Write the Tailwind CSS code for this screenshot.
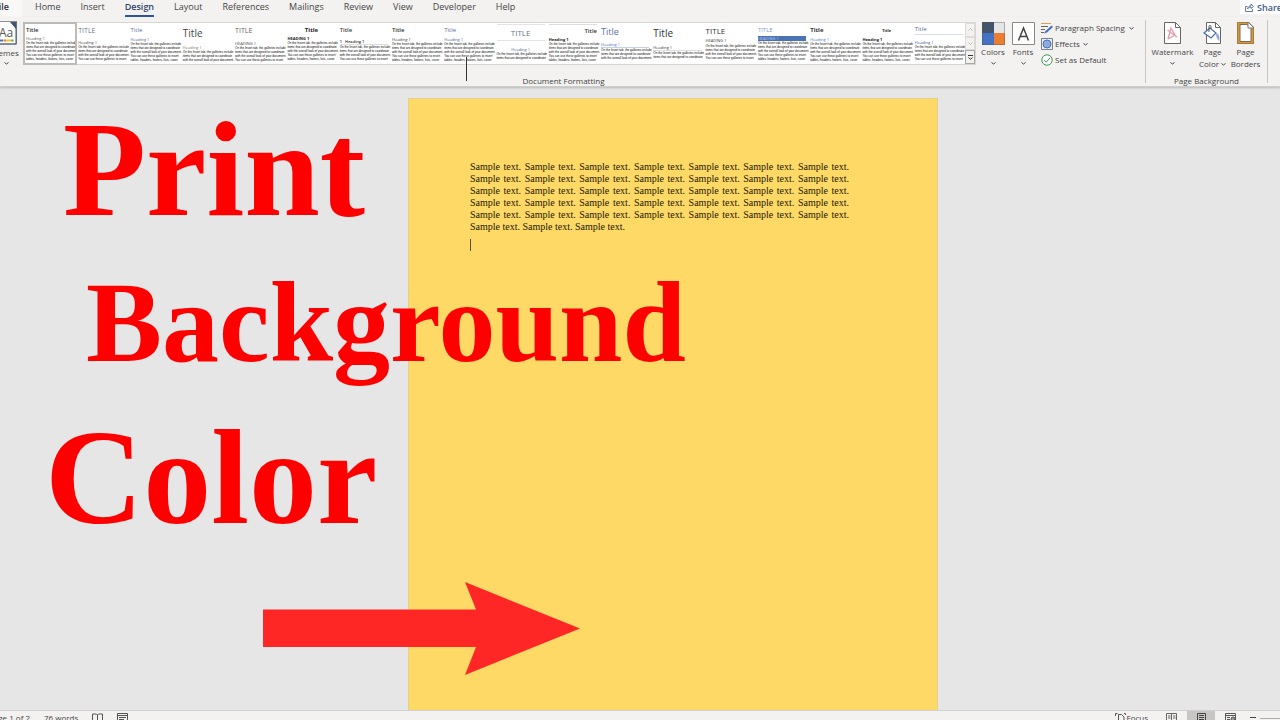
<!DOCTYPE html>
<html lang="en">
<head>
  <meta charset="utf-8">
  <meta name="viewport" content="width=device-width, initial-scale=1">
  <title>Print Background Color</title>
  <script src="https://cdn.jsdelivr.net/npm/@tailwindcss/browser@4"></script>
</head>
<body class="bg-[#e6e6e6]">
<div class="relative flex h-screen flex-col overflow-hidden font-['Open_Sans','Noto_Sans',sans-serif] text-[8px] text-[#444444]">

  <!-- Tabs -->
  <header class="flex h-[17px] items-start justify-between bg-[#f3f2f1] text-[9px]">
    <nav class="flex gap-[20px] leading-[13px]">
      <a href="#" class="-ml-[7px] h-[17px] w-[29px] bg-[#f9f8f7] pl-[1px] font-semibold text-[#333333] -mr-[7px]">File</a>
      <a href="#">Home</a>
      <a href="#">Insert</a>
      <a href="#" class="border-b-2 border-[#2b579a] font-semibold text-[#2f4668]">Design</a>
      <a href="#">Layout</a>
      <a href="#">References</a>
      <a href="#">Mailings</a>
      <a href="#">Review</a>
      <a href="#">View</a>
      <a href="#">Developer</a>
      <a href="#">Help</a>
    </nav>
    <button class="-mr-[2px] flex h-[14px] items-center gap-[3px] bg-white pl-[5px] font-semibold leading-[13px] text-[#3d5a8c]">
      <svg class="h-[9px] w-[9px]" viewBox="0 0 9 9" fill="none" stroke="currentColor"><path d="M2.5 3.500H.5v5h7V6M2.500 6C3 3.500 4.500 2.700 6 2.700V1l2.500 2.500L6 5.500V4C4.500 4 3.300 4.700 2.500 6z" stroke-width=".8"/></svg>
      Share
    </button>
  </header>

  <!-- Ribbon -->
  <section class="flex h-[70px] shrink-0 border-b border-[#cfcdcc] bg-[#f3f2f1] shadow-[0_1px_2px_rgba(0,0,0,0.2)]">
    <div class="-ml-[18px] flex w-[1163px] shrink-0 flex-col justify-between">
      <div class="flex items-start pl-[5px] pt-[4px]">
        <button class="mr-[2px] flex w-[34px] shrink-0 flex-col items-center leading-[12px]">
          <svg class="h-[24px] w-[26px]" viewBox="0 0 26 24">
            <rect x=".5" y=".5" width="25" height="22.500" fill="#fff" stroke="#8a9099"/>
            <path d="M19 1h6v7z" fill="#44546a"/>
            <text x="8" y="16" font-size="12" fill="#555555">Aa</text>
            <path d="M9 19.500h3" stroke="#4472c4" stroke-width="2"/><path d="M12.500 19.500h3" stroke="#ed7d31" stroke-width="2"/><path d="M16 19.500h3" stroke="#ffc000" stroke-width="2"/><path d="M19.500 19.500h3" stroke="#70ad47" stroke-width="2"/>
            <path d="M25 1v22H1" fill="none" stroke="#44546a"/>
          </svg>
          <span class="mt-[2px]">Themes</span>
          <svg class="mt-[3px] ml-[4px] h-[3px] w-[5px]" viewBox="0 0 5 3"><path d="M.5.5l2 1.500 2-1.500" fill="none" stroke="#444"/></svg>
        </button>

        <div class="mt-[1px] flex h-[43px] border border-[#d8d6d4] bg-white">
          <div id="gallery" class="grid w-[941px] grid-cols-18"></div>
          <div class="flex w-[10px] flex-col">
            <button aria-label="Scroll up" class="flex flex-1 items-center justify-center border border-[#dddbd9] bg-[#f3f2f1]"><svg class="h-[3px] w-[5px]" viewBox="0 0 5 3"><path d="M.5 2.500l2-2 2 2" fill="none" stroke="#bbb"/></svg></button>
            <button aria-label="Scroll down" class="flex flex-1 items-center justify-center border border-[#dddbd9] bg-[#f3f2f1]"><svg class="h-[3px] w-[5px]" viewBox="0 0 5 3"><path d="M.5.5l2 2 2-2" fill="none" stroke="#bbb"/></svg></button>
            <button aria-label="More styles" class="flex flex-1 items-center justify-center border border-[#a8a6a4] bg-[#f3f2f1]"><svg class="h-[5px] w-[5px]" viewBox="0 0 5 5"><path d="M0 .5h5M.5 2.500l2 1.800 2-1.800" fill="none" stroke="#333"/></svg></button>
          </div>
        </div>

        <button class="ml-[3px] flex w-[28px] shrink-0 flex-col items-center pt-[1px] leading-[12px]">
          <svg class="h-[23px] w-[23px]" viewBox="0 0 23 23"><path d="M0 0h12v11H0z" fill="#44546a"/><path d="M12 0h11v11H12z" fill="#e7e6e6"/><path d="M0 11h12v12H0z" fill="#4472c4"/><path d="M12 11h11v12H12z" fill="#ed7d31"/><path d="M.5.5h22v22H.5z" fill="none" stroke="#555" stroke-opacity=".4"/></svg>
          <span class="mt-[1px]">Colors</span>
          <svg class="mt-[4px] h-[3px] w-[5px]" viewBox="0 0 5 3"><path d="M.5.5l2 1.500 2-1.500" fill="none" stroke="#444"/></svg>
        </button>
        <button class="ml-[2px] flex w-[28px] shrink-0 flex-col items-center pt-[1px] leading-[12px]">
          <svg class="h-[23px] w-[23px]" viewBox="0 0 23 23"><path d="M.5.5h22v22H.5z" fill="#fff" stroke="#8a8886"/><path d="M6.500 18.500L11.500 6l5 12.500M8.200 14.500h6.600" fill="none" stroke="#444" stroke-width="1.500"/></svg>
          <span class="mt-[1px]">Fonts</span>
          <svg class="mt-[4px] h-[3px] w-[5px]" viewBox="0 0 5 3"><path d="M.5.5l2 1.500 2-1.500" fill="none" stroke="#444"/></svg>
        </button>

        <div class="ml-[4px] flex flex-col gap-[4px] whitespace-nowrap pt-[1px] leading-[12px]">
          <button class="flex items-center gap-[2px]">
            <svg class="h-[12px] w-[12px]" viewBox="0 0 12 12" fill="none"><path d="M0 1.500h9M0 4.500h7M0 7.500h4M0 10.500h3" stroke="#666"/><path d="M0 1.500h10" stroke="#d8a04a"/><path d="M4 9.500l6.500-6 1.500 1.500-6 5.500-3 1z" fill="#4472c4"/></svg>
            Paragraph Spacing
            <svg class="ml-[2px] h-[3px] w-[5px]" viewBox="0 0 5 3"><path d="M.5.5l2 1.500 2-1.500" fill="none" stroke="#444"/></svg>
          </button>
          <button class="flex items-center gap-[2px]">
            <svg class="h-[12px] w-[12px]" viewBox="0 0 12 12"><path d="M.5.500h11v11H.5z" fill="#e9eef7" stroke="#7a7f88"/><circle cx="6" cy="6" r="4" fill="#8faadc" stroke="#4472c4"/></svg>
            Effects
            <svg class="ml-[1px] h-[3px] w-[5px]" viewBox="0 0 5 3"><path d="M.5.5l2 1.500 2-1.500" fill="none" stroke="#444"/></svg>
          </button>
          <button class="flex items-center gap-[2px]">
            <svg class="h-[12px] w-[12px]" viewBox="0 0 12 12" fill="none"><circle cx="6" cy="6" r="5.200" fill="#fff" stroke="#3d9a50"/><path d="M3.200 6l2 2.200 3.800-4.200" stroke="#3d9a50"/></svg>
            Set as Default
          </button>
        </div>
      </div>
      <div class="text-center leading-[11px]">Document Formatting</div>
    </div>

    <div class="my-[3px] flex w-[123px] shrink-0 flex-col justify-between border-x border-[#c8c6c4]">
      <div class="flex gap-[4px] pl-[5px] pt-[2px]">
        <button class="flex w-[43px] flex-col items-center leading-[12px]">
          <svg class="h-[22px] w-[17px]" viewBox="0 0 17 22"><path d="M.5.5h11l5 5v16H.5z" fill="#fff" stroke="#666"/><path d="M11.500.5v5h5" fill="none" stroke="#666"/><path d="M3.500 8L13 15M4 17L7 6l4 7-7 4" fill="none" stroke="#e5a0ae" stroke-width="1.400"/></svg>
          <span class="mt-[2px]">Watermark</span>
          <svg class="mt-[4px] h-[3px] w-[5px]" viewBox="0 0 5 3"><path d="M.5.5l2 1.500 2-1.500" fill="none" stroke="#444"/></svg>
        </button>
        <button class="flex w-[29px] flex-col items-center leading-[12px]">
          <svg class="h-[22px] w-[20px]" viewBox="0 0 20 22"><path d="M3.500.5h9l5 5v16h-14z" fill="#fff" stroke="#666"/><path d="M12.500.5v5h5" fill="none" stroke="#666"/><path d="M1 11l6-5 6 5-5 5z" fill="#fff" stroke="#4a6fa5" stroke-width="1.200"/><path d="M6 10V4.500c0-1.500 2-1.500 2 0V7" fill="none" stroke="#555"/><path d="M13 11c3 1 4 4 3 8-2-2-3-4-3-8z" fill="#8faadc"/></svg>
          <span class="mt-[2px]">Page</span>
          <span class="flex items-center gap-[2px]">Color <svg class="h-[3px] w-[5px]" viewBox="0 0 5 3"><path d="M.5.500l2 1.500 2-1.500" fill="none" stroke="#444"/></svg></span>
        </button>
        <button class="flex w-[29px] flex-col items-center leading-[12px]">
          <svg class="h-[22px] w-[17px]" viewBox="0 0 17 22"><path d="M0 0h12l5 5v17H0z" fill="#d59a3c"/><path d="M3 2.500h7l4 4v13H3z" fill="#fff" stroke="#7a6a50"/><path d="M.5.500h11l5 5v16H.5z" fill="none" stroke="#a07a3c"/><path d="M11 0v6h6z" fill="#fff" stroke="#777"/></svg>
          <span class="mt-[2px]">Page</span>
          <span>Borders</span>
        </button>
      </div>
      <div class="-mb-[3px] text-center leading-[11px]">Page Background</div>
    </div>
  </section>

  <!-- Document area -->
  <main class="relative flex min-h-0 flex-1 justify-center pl-[66px] pt-[11px]">
    <article class="w-[530px] border border-b-0 border-[#e3cf8f] bg-[#fed966] pl-[61px] pr-[88px] pt-[62px] font-['Liberation_Serif',serif] text-[10px] leading-[12px] text-[#1c1708]">
      <p class="text-justify">Sample text. Sample text. Sample text. Sample text. Sample text. Sample text. Sample text. Sample text. Sample text. Sample text. Sample text. Sample text. Sample text. Sample text. Sample text. Sample text. Sample text. Sample text. Sample text. Sample text. Sample text. Sample text. Sample text. Sample text. Sample text. Sample text. Sample text. Sample text. Sample text. Sample text. Sample text. Sample text. Sample text. Sample text. Sample text. Sample text. Sample text. Sample text.</p>
      <div class="mt-[6px] h-[12px] w-px bg-[#55502f]"></div>
    </article>

    <!-- Caption laid over the page -->
    <h1 class="absolute left-0 top-0 pt-[14px] font-['Liberation_Serif',serif] font-bold text-[#ff0000]">
      <span class="block pl-[63px] text-[136px] leading-[136px]">Print</span>
      <span class="mt-[30px] block pl-[86px] text-[114px] leading-[112px]">Background</span>
      <span class="mt-[30px] block pl-[45px] text-[136px] leading-[136px]">Color</span>
    </h1>
    <svg class="absolute left-[263px] top-[495px] h-[93px] w-[317px]" viewBox="0 0 317 93"><path d="M0 27.500h213L202 0l115 46.500L202 93l11-28H0z" fill="#ff2626"/></svg>
  </main>

  <!-- Status bar -->
  <footer class="flex h-[10px] shrink-0 justify-between overflow-hidden border-t border-[#d2d0ce] bg-[#f3f2f1] leading-[14px]">
    <div class="flex gap-[14px]">
      <span class="-ml-[11px]">Page 1 of 2</span>
      <span>76 words</span>
      <svg class="mt-[2px] h-[10px] w-[11px]" viewBox="0 0 11 10" fill="none" stroke="#555"><path d="M.5 1h4l1 1 1-1h4v8H.5zM5.500 2v7"/></svg>
      <svg class="mt-[2px] h-[10px] w-[11px]" viewBox="0 0 11 10" fill="none" stroke="#555"><path d="M.5.5h10v9H.5zM0 2.500h11M2 4.500h7M2 6.500h5"/></svg>
    </div>
    <div class="flex">
      <svg class="mt-[2px] mr-[1px] h-[10px] w-[11px]" viewBox="0 0 11 10" fill="none" stroke="#555"><path d="M3.500 1.500h3l2.500 2.500v6h-5.500zM.5 3V.5h2M9 .5h1.500V2"/></svg>
      <span class="mr-[18px]">Focus</span>
      <svg class="mt-[2px] mr-[10px] h-[10px] w-[11px]" viewBox="0 0 11 10" fill="none" stroke="#666"><path d="M.5.500h10v9H.5zM5.500 1v9M2 3h2.500M2 5h2.500M7 3h2.500M7 5h2.500"/></svg>
      <span class="mr-[10px] flex w-[28px] justify-center bg-[#c8c6c4]"><svg class="mt-[2px] h-[10px] w-[9px]" viewBox="0 0 9 10" fill="none" stroke="#444"><path d="M.5.500h8v9h-8zM2 2.500h5M2 4.500h5M2 6.500h5"/></svg></span>
      <svg class="mt-[2px] mr-[14px] h-[10px] w-[11px]" viewBox="0 0 11 10" fill="none" stroke="#555"><path d="M.5.500h10v9H.5zM0 2.500h11M2 4.500h3M2 6.500h3"/><circle cx="8" cy="6" r="2" fill="#999"/></svg>
      <span class="mt-[6px] mr-[4px] h-px w-[6px] bg-[#444]"></span>
      <span class="mt-[7px] h-px w-[20px] bg-[#b0aeac]"></span>
    </div>
  </footer>

  <!-- Text cursor of the mouse -->
  <div class="absolute left-[466px] top-[57px] h-[24px] w-px bg-[#333333]"></div>
</div>

<script>
  // One entry per style set: title, title classes, heading, heading classes, body lines
  const sets = [
    ['Title', 'text-[6px] leading-[12px] font-semibold text-[#333]', 'Heading 1', 'text-[4px] text-[#555]', 5],
    ['TITLE', 'text-[7px] leading-[13px] mb-[3px] text-[#6b7686]', 'Heading 1', 'text-[4px] text-[#444]', 4],
    ['Title', 'text-[6px] leading-[13px] text-[#66769a]', 'Heading 1', 'text-[4px] text-[#4a5f8a]', 5],
    ['Title', 'text-[10px] leading-[19px] mb-[2px] text-[#444]', 'Heading 1', 'text-[4px] text-[#7a7a55]', 3],
    ['TITLE', 'text-[7px] leading-[13px] mb-[4px] text-[#666]', 'HEADING 1', 'text-[4px] text-[#444]', 4],
    ['Title', 'text-[6px] leading-[12px] text-center font-bold text-[#222]', 'HEADING 1', 'text-[4px] font-bold text-[#222]', 5],
    ['Title', 'text-[6px] leading-[13px] mb-[2px] font-semibold text-[#444]', '1   Heading 1', 'whitespace-pre border-b border-[#ddd] text-[4px] font-semibold text-[#333]', 4],
    ['Title', 'text-[6px] leading-[13px] font-semibold text-[#333]', 'Heading 1', 'text-[4px] text-[#333]', 5],
    ['Title', 'text-[6px] leading-[12px] mb-[1px] text-[#5a6c9a]', 'Heading 1', 'text-[4px] text-[#4a5f8a]', 5],
    ['TITLE', 'text-[8px] leading-[15px] mb-[6px] border-y border-[#e4e4e4] text-center text-[#66748a]', 'Heading 1', 'text-center text-[4px] text-[#4a5f8a]', 2],
    ['Title', 'text-[6px] leading-[12px] border-t border-[#ddd] text-right font-semibold text-[#333]', 'Heading 1', 'text-[4px] font-bold text-[#222]', 5],
    ['Title', 'text-[9px] leading-[16px] mb-[2px] text-[#5673a4]', 'Heading 1', 'border-b border-[#c5d0e4] text-[4px] text-[#4472c4]', 3],
    ['Title', 'text-[10px] leading-[19px] mb-[2px] text-[#333]', 'Heading 1', 'border-b border-[#ddd] text-[4px] text-[#333]', 2],
    ['TITLE', 'text-[8px] leading-[14px] text-[#333]', 'HEADING 1', 'mb-[1px] text-[4px] text-[#333]', 4],
    ['TITLE', 'text-[6px] leading-[12px] text-[#7f9ac4]', 'HEADING 1', 'bg-[#4a72b4] text-[4px] text-[#b8cbea]', 5],
    ['Title', 'text-[6px] leading-[13px] font-bold text-[#333]', 'Heading 1', 'text-[4px] text-[#4472c4]', 5],
    ['Title', 'text-[4px] leading-[13px] text-center font-bold text-[#222]', 'Heading 1', 'text-[4px] font-bold text-[#222]', 5],
    ['Title', 'text-[6px] leading-[10px] mb-[5px] border-b border-[#d5dcea] text-[#5a6c9a]', 'Heading 1', 'text-[4px] text-[#3a5590]', 4],
  ];
  const lines = [
    'On the Insert tab, the galleries include',
    'items that are designed to coordinate',
    'with the overall look of your document.',
    'You can use these galleries to insert',
    'tables, headers, footers, lists, cover',
  ];

  document.getElementById('gallery').innerHTML = sets.map(([title, titleCls, heading, headingCls, n], i) => `
    <button class="${i === 0 ? 'text-left outline-2 -outline-offset-1 outline-[#bdbbb9] pl-[2px] pr-[2px] pt-[1px]' : 'text-left pl-[2px] pr-[2px] pt-[1px]'}">
      <div class="h-full">
        <div class="${titleCls}">${title}</div>
        <div class="leading-[5px] ${headingCls}">${heading}</div>
        <div class="whitespace-nowrap font-['Liberation_Sans_Narrow','Liberation_Sans',sans-serif] text-[3px] leading-[4px] text-black">${lines.slice(0, n).join('<br>')}</div>
      </div>
    </button>`).join('');
</script>
</body>
</html>
